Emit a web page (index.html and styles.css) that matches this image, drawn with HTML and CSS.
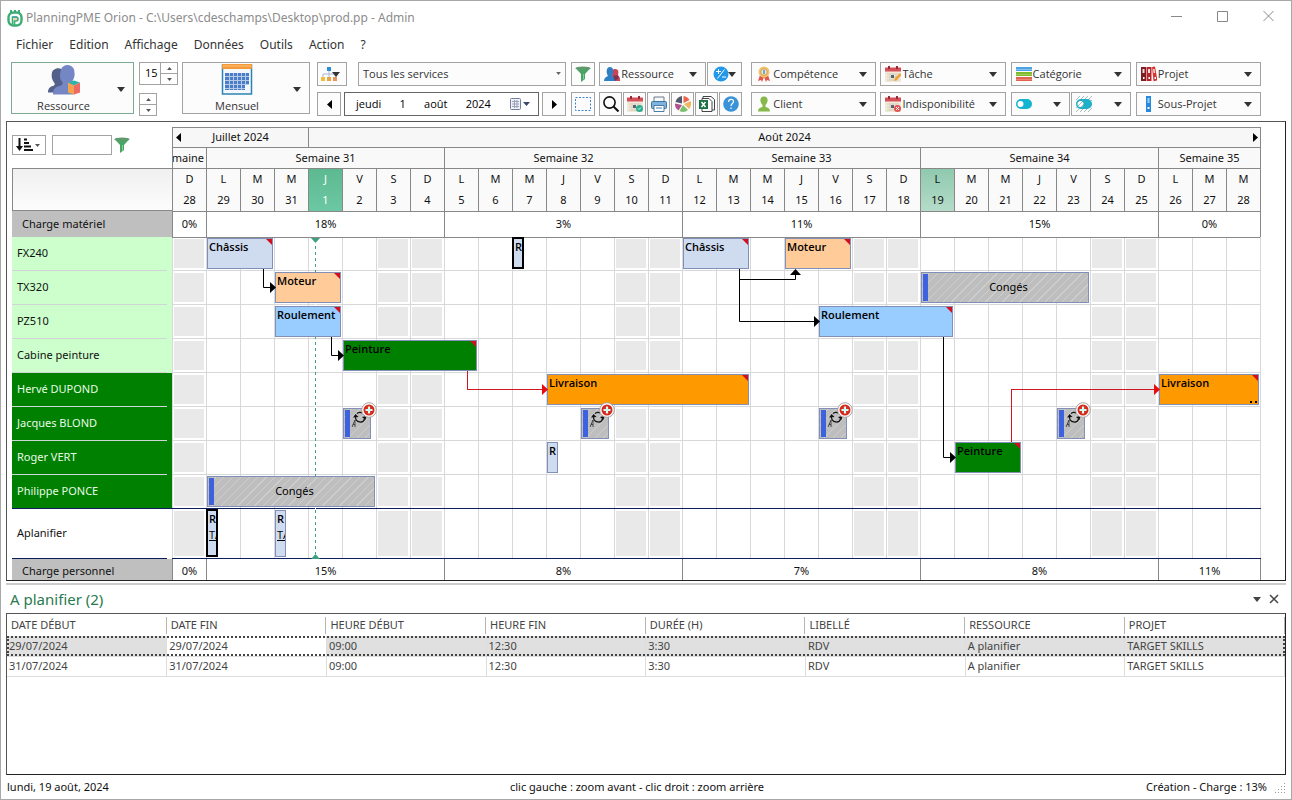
FILE: index.html
```html
<!DOCTYPE html>
<html lang="fr">
<head>
<meta charset="utf-8">
<title>PlanningPME Orion</title>
<link rel="stylesheet" href="styles.css">
</head>
<body>
<svg class="defs" aria-hidden="true">
  <symbol id="caret" viewBox="0 0 8 5"><path d="M0 0h8L4 5z" fill="currentColor"/></symbol>
  <symbol id="funnel" viewBox="0 0 16 16"><path d="M.5 2l5.500 6v8l4-3V8l5.500-6z" fill="#4aa564"/><ellipse cx="8" cy="2.200" rx="7.500" ry="1.800" fill="#5d9a6c"/><path d="M8 8h1v5l-1 .7z" fill="#7fd097"/></symbol>
  <symbol id="cal" viewBox="0 0 16 16"><path d="M0 2h16v14H0z" fill="#f0e9d8"/><path d="M0 1.500h16v4H0z" fill="#d64f58"/><path d="M3 0h2v3H3zM11 0h2v3h-2z" fill="#8a2f38"/><path d="M2 8h12M2 11h12M2 14h12M5 7v8M8 7v8M11 7v8" stroke="#d8d1bf" fill="none"/><path d="M6 9h3v3H6z" fill="#5b6472"/></symbol>
  <symbol id="recur" viewBox="0 0 28 30"><path d="M9 19l3-7v7M10 16.500h2" fill="none" stroke="#444"/><g fill="none" stroke="#111" stroke-width="1.200"><path d="M12.500 9c0 6 8 6.500 9 2"/><path d="M14 5.500c1.500-1.500 4-1.500 5-.5"/></g><path d="M10 9.500L12.500 6l3 3zM19 9l4.500-1-1 4z" fill="#111"/></symbol>
  <symbol id="plus" viewBox="0 0 16 16"><circle cx="8" cy="8" r="7.300" fill="#fff" stroke="#a9a0a0" stroke-width="1"/><circle cx="8" cy="8" r="5.500" fill="#d8291c"/><path d="M8 4.500v7M4.500 8h7" stroke="#c9fff5" stroke-width="2.200"/></symbol>
</svg>
<div class="window">
  <header class="titlebar">
    <svg class="logo" viewBox="0 0 16 17"><rect x="1.500" y="2.500" width="13" height="13" rx="5" fill="#fff" stroke="#3dab74" stroke-width="2.400"/><path d="M4 0v4M8 0v3M12 0v4" stroke="#3dab74" stroke-width="2"/><path d="M5.500 14V7H9q2 0 2 2t-2 2H7.500v4" fill="none" stroke="#3dab74" stroke-width="1.600"/><path d="M6 7h4" stroke="#2f8fcf" stroke-width="1"/><path d="M7 9h3" stroke="#f0a53a" stroke-width="1"/></svg>
    <h1 class="title">PlanningPME Orion - C:\Users\cdeschamps\Desktop\prod.pp - Admin</h1>
    <div class="winbtns">
      <button aria-label="Réduire"><svg viewBox="0 0 12 12"><path d="M0 6.500h11"/></svg></button>
      <button aria-label="Agrandir"><svg viewBox="0 0 12 12"><path d="M.5 1.500h10v10H.5z"/></svg></button>
      <button aria-label="Fermer"><svg viewBox="0 0 12 12"><path d="M.5 1l10 10M10.500 1l-10 10"/></svg></button>
    </div>
  </header>
  <nav class="menubar">
    <button>Fichier</button><button>Edition</button><button>Affichage</button><button>Données</button><button>Outils</button><button>Action</button><button>?</button>
  </nav>

  <div class="toolbar">
    <button class="big res">
      <svg class="bigicon" viewBox="0 0 32 30"><path d="M0 28c0-5 3-6 6-7 1-1 1-2 0-3-2-3-3-6-2-10C5 4 12 2 15 6v22z" fill="#53608a"/><path d="M5 30c0-7 4-8 8-9 2-1 2-3 1-4-3-3-2-8-1-12 2-6 11-6 13 0 1 4 1 8-2 12-1 2 0 3 2 4v9z" fill="#7486c4"/><path d="M20 18l6-2 6 2-6 3z" fill="#2bb5a8"/><path d="M20 18l6 3v9l-6-2z" fill="#f5a14d"/><path d="M32 18l-6 3v9l6-2z" fill="#ef6a62"/></svg>
      <span>Ressource</span><svg class="bigcaret"><use href="#caret"/></svg>
    </button>
    <div class="spins">
      <div class="spin"><input type="text" value="15" aria-label="Pas"><span class="updown"><button aria-label="Plus"><svg class="up"><use href="#caret"/></svg></button><button aria-label="Moins"><svg><use href="#caret"/></svg></button></span></div>
      <div class="spin bare"><span class="updown"><button aria-label="Monter"><svg class="up"><use href="#caret"/></svg></button><button aria-label="Descendre"><svg><use href="#caret"/></svg></button></span></div>
    </div>
    <button class="big">
      <svg class="bigicon" viewBox="0 0 32 31"><rect x="1.500" y="1" width="29" height="29" fill="#f4f8fb" stroke="#2d82b5" stroke-width="1.500"/><rect x="1" y="0" width="30" height="5" rx="1" fill="#f39a3b"/><path d="M2 2h28" stroke="#ffc27e"/><path d="M4 9h24v12h-4v5H4z" fill="#4a7cc9"/><path d="M4 12.500h24M4 16.500h24M4 20.500h24M4 24.500h20M8.500 9v17M12.500 9v17M16.500 9v17M20.500 9v17M24.500 9v12" stroke="#b5cbe6" fill="none"/></svg>
      <span>Mensuel</span><svg class="bigcaret"><use href="#caret"/></svg>
    </button>
    <div class="lines services">
      <div class="line">
        <button class="tool wide" aria-label="Organigramme"><svg class="i22" viewBox="0 0 22 16"><path d="M8 3v5M2 12V8h13v4M8 8v4" stroke="#a9b9d6" fill="none"/><path d="M6 1h4v4H6z" fill="#2b8fd8"/><path d="M0 11h4v4H0z" fill="#efbf3b"/><path d="M6 11h4v4H6z" fill="#eaa33e"/><path d="M12 11h4v4h-4z" fill="#e8935e"/><path d="M11 6h8l-4 5z" fill="#333"/></svg></button>
        <div class="combo grow plain"><select aria-label="Service"><option>Tous les services</option></select><svg class="caret tiny"><use href="#caret"/></svg></div>
      </div>
      <div class="line tight">
        <button class="tool" aria-label="Précédent"><svg class="nav" viewBox="0 0 5 9"><path d="M5 0v9L0 4.500z"/></svg></button>
        <button class="date"><span>jeudi</span><span>1</span><span>août</span><span>2024</span><svg class="i22" viewBox="0 0 22 14"><rect x="1.500" y="1.500" width="10" height="11" rx="1" fill="#eef1f7" stroke="#77809a"/><path d="M3 4.500h7M3 7h7M3 9.500h7M5.500 3v8M8 3v8" stroke="#9aa3b8"/><path d="M14 5h7l-3.500 4z" fill="#3c4a66"/></svg></button>
        <button class="tool" aria-label="Suivant"><svg class="nav" viewBox="0 0 5 9"><path d="M0 0v9l5-4.500z"/></svg></button>
      </div>
    </div>
    <div class="lines filters">
      <button class="tool" aria-label="Filtrer"><svg class="i16"><use href="#funnel"/></svg></button>
      <button class="tool" aria-label="Sélection"><svg class="i16" viewBox="0 0 16 16"><rect x=".5" y="1.500" width="15" height="13" fill="none" stroke="#3b82d0" stroke-dasharray="2 1.500"/></svg></button>
    </div>
    <div class="lines icons">
      <div class="line join">
        <div class="combo grow"><svg class="i16" viewBox="0 0 16 16"><path d="M9 15c0-4-1-4-1-6 0-5 1-6 3-6 3 0 4 2 3 6 2 2 2 4 2 6z" fill="#c94558"/><path d="M0 15c0-3 2-4 4-5-2-3-2-9 2-9s4 6 2 9c2 1 4 2 4 5z" fill="#2f7fc6"/><path d="M9 10l4-1 2 3-4 3z" fill="#7d3550"/></svg><select aria-label="Ressource"><option>Ressource</option></select><svg class="caret"><use href="#caret"/></svg></div>
        <button class="tool pm" aria-label="Plus ou moins"><svg class="i24" viewBox="0 0 24 16"><circle cx="8" cy="8" r="7.500" fill="#2397e8"/><path d="M3 5.500h5M5.500 3v5M9 11h4M11.500 3.500l-7 9" stroke="#fff" fill="none"/><path d="M15 6h8l-4 5z" fill="#333"/></svg></button>
      </div>
      <div class="line join six">
        <button class="tool" aria-label="Rechercher"><svg class="i16" viewBox="0 0 16 16"><circle cx="6.500" cy="6.500" r="5.600" fill="none" stroke="#111" stroke-width="1.600"/><path d="M10.500 10.500l5 5" stroke="#111" stroke-width="2"/></svg></button>
        <button class="tool" aria-label="Valider"><svg class="i16" viewBox="0 0 16 16"><use href="#cal"/><circle cx="12.500" cy="12.500" r="3.500" fill="#27ae8f"/><path d="M11 12.500l1 1 2-2" stroke="#fff" fill="none"/></svg></button>
        <button class="tool" aria-label="Imprimer"><svg class="i16" viewBox="0 0 16 16"><path d="M3 1h10v5H3z" fill="#f5f7f9" stroke="#6d7b88"/><rect x=".5" y="5.500" width="15" height="7" rx="1" fill="#7fb3dd" stroke="#3e74a5"/><path d="M3 9.500h10v6H3z" fill="#fff" stroke="#4b7da8"/><path d="M5 12h6" stroke="#4b7da8"/></svg></button>
        <button class="tool" aria-label="Statistiques"><svg class="i16" viewBox="0 0 16 16"><path d="M7 7.500V0a8 8 0 0 0-6.500 6z" fill="#50586e"/><path d="M8.500 7V0a7.800 7.800 0 0 1 6 4z" fill="#e8654e"/><path d="M15.500 5L9 8l5 5a8 8 0 0 0 1.500-8z" fill="#f1b75c"/><path d="M8 9l5 5a8 8 0 0 1-8.500 1z" fill="#7cc06b"/><path d="M7 9L3.500 14.500A8 8 0 0 1 0 7.500z" fill="#b0508c"/></svg></button>
        <button class="tool" aria-label="Excel"><svg class="i16" viewBox="0 0 16 16"><path d="M4 3V.5h8l3.500 3V14H13" fill="#fff" stroke="#444"/><path d="M3 2.500h7l3 3v10H3z" fill="#fff" stroke="#444"/><rect y="4" width="9" height="9" fill="#1e7145"/><path d="M2.500 6l4 5M6.500 6l-4 5" stroke="#fff" stroke-width="1.500"/></svg></button>
        <button class="tool" aria-label="Aide"><svg class="i16" viewBox="0 0 16 16"><circle cx="8" cy="8" r="7.800" fill="#3a92d8"/><path d="M5.500 6c0-3.500 5-3.500 5-.5C10.500 7.500 8 7.500 8 10M8 11.500V13" fill="none" stroke="#fff" stroke-width="1.200"/></svg></button>
      </div>
    </div>
    <div class="lines drop first">
      <div class="combo"><svg class="i16" viewBox="0 0 16 16"><path d="M4 9l-2 6 3-1 1 2 2-5 2 5 1-2 3 1-2-6z" fill="#e2574c"/><circle cx="8" cy="6" r="5.500" fill="#f2c46d"/><circle cx="8" cy="6" r="3.300" fill="#dfe7ee" stroke="#d99e3d"/><path d="M7 4h2v4H7z" fill="#8aa0b5"/></svg><select aria-label="Compétence"><option>Compétence</option></select><svg class="caret"><use href="#caret"/></svg></div>
      <div class="combo"><svg class="i16" viewBox="0 0 16 16"><path d="M2 15.500c0-3 2-4 4.500-4.500V9C3 5 4 .5 8 .5S13 5 9.500 9v2c2.500.5 4.500 1.500 4.500 4.500z" fill="#86b84a"/></svg><select aria-label="Client"><option>Client</option></select><svg class="caret"><use href="#caret"/></svg></div>
    </div>
    <div class="lines drop">
      <div class="combo"><svg class="i16" viewBox="0 0 16 16"><use href="#cal"/><path d="M9 15l1-3 5-5 1.500 2L12 14z" fill="#efa036"/></svg><select aria-label="Tâche"><option>Tâche</option></select><svg class="caret"><use href="#caret"/></svg></div>
      <div class="combo"><svg class="i16" viewBox="0 0 16 16"><use href="#cal"/><circle cx="12.500" cy="12.500" r="3.500" fill="#e35353"/><path d="M11 11l3 3M14 11l-3 3" stroke="#fff"/></svg><select aria-label="Indisponibilité"><option>Indisponibilité</option></select><svg class="caret"><use href="#caret"/></svg></div>
    </div>
    <div class="lines drop cat">
      <div class="combo"><svg class="i16" viewBox="0 0 16 16"><path d="M0 1h16v4H0z" fill="#4ba3e3"/><path d="M0 6h16v4H0z" fill="#7fba2c"/><path d="M0 11h16v4H0z" fill="#e2644f"/><path d="M0 3.500h16" stroke="#86c2ef"/><path d="M0 8.500h16" stroke="#9fcf58"/><path d="M0 13.500h16" stroke="#ec8878"/></svg><select aria-label="Catégorie"><option>Catégorie</option></select><svg class="caret"><use href="#caret"/></svg></div>
      <div class="line join">
        <div class="combo grow"><svg class="i16" viewBox="0 0 16 16"><rect y="3" width="16" height="10" rx="5" fill="#12b5cf"/><circle cx="4.500" cy="8" r="3" fill="#fff"/></svg><select aria-label="État"><option></option></select><svg class="caret"><use href="#caret"/></svg></div>
        <div class="combo grow"><svg class="i16" viewBox="0 0 16 16"><rect y="3" width="16" height="10" rx="5" fill="#12b5cf"/><circle cx="4.500" cy="8" r="3" fill="#fff"/><path d="M0 4l4-4M0 8l8-8M0 12L12 0M0 16L16 0M4 16L16 4M8 16l8-8M12 16l4-4" stroke="#6d8f99" stroke-width=".6"/></svg><select aria-label="État grisé"><option></option></select><svg class="caret"><use href="#caret"/></svg></div>
      </div>
    </div>
    <div class="lines drop last">
      <div class="combo"><svg class="i16" viewBox="0 0 16 16"><path d="M0 1h5v14H0z" fill="#7e1f24"/><path d="M5.500 1h5v14h-5z" fill="#b5262b"/><path d="M11 1l3-.5 2.500 14-4 .8z" fill="#d9342f"/><path d="M1.500 3h2v4h-2zM7 3h2v4H7zM12 3h1.500l.7 4h-1.500z" fill="#f3dede"/><path d="M2 11h1.500v2H2zM7.500 11H9v2H7.500zM13.500 11H15v2h-1.500z" fill="#fff"/></svg><select aria-label="Projet"><option>Projet</option></select><svg class="caret"><use href="#caret"/></svg></div>
      <div class="combo"><svg class="i16" viewBox="0 0 16 16"><path d="M5 0h5v16H5z" fill="#2589e0"/><path d="M6.500 2h2v5h-2z" fill="#9fd0f8"/><path d="M6.500 11h2v2h-2z" fill="#fff"/></svg><select aria-label="Sous-Projet"><option>Sous-Projet</option></select><svg class="caret"><use href="#caret"/></svg></div>
    </div>
  </div>

  <main class="planner">
    <div class="side">
      <div class="sidetools">
        <button class="sort" aria-label="Trier"><svg viewBox="0 0 26 14"><path d="M3.500 0v10" stroke="#111" stroke-width="2"/><path d="M0 8h7l-3.500 5z" fill="#111"/><path d="M8 1.500h3M8 5h5M8 8.500h7M8 12h9" stroke="#111" stroke-width="2"/><path d="M19 6h5l-2.500 3z" fill="#555"/></svg></button>
        <input type="text" aria-label="Recherche"><svg class="i16"><use href="#funnel"/></svg>
      </div>
      <div class="sidehead"></div>
      <div class="load">Charge matériel</div>
      <ul class="names">
        <li>FX240</li><li>TX320</li><li>PZ510</li><li>Cabine peinture</li>
        <li class="person">Hervé DUPOND</li><li class="person">Jacques BLOND</li><li class="person">Roger VERT</li><li class="person">Philippe PONCE</li>
        <li class="todo">Aplanifier</li>
      </ul>
      <div class="load foot">Charge personnel</div>
    </div>
    <div class="chart">
      <div class="cols months">
        <div class="s4"><svg class="nav prev" viewBox="0 0 5 9"><path d="M5 0v9L0 4.500z"/></svg>Juillet 2024</div>
        <div class="s28">Août 2024<svg class="nav next" viewBox="0 0 5 9"><path d="M0 0v9l5-4.500z"/></svg></div>
      </div>
      <div class="cols weeks"><div class="cut"><span>Semaine 30</span></div><div class="s7">Semaine 31</div><div class="s7">Semaine 32</div><div class="s7">Semaine 33</div><div class="s7">Semaine 34</div><div class="s3">Semaine 35</div></div>
      <div class="cols days">
        <div>D<b>28</b></div><div>L<b>29</b></div><div>M<b>30</b></div><div>M<b>31</b></div><div class="start">J<b>1</b></div><div>V<b>2</b></div><div>S<b>3</b></div><div>D<b>4</b></div>
        <div>L<b>5</b></div><div>M<b>6</b></div><div>M<b>7</b></div><div>J<b>8</b></div><div>V<b>9</b></div><div>S<b>10</b></div><div>D<b>11</b></div>
        <div>L<b>12</b></div><div>M<b>13</b></div><div>M<b>14</b></div><div>J<b>15</b></div><div>V<b>16</b></div><div>S<b>17</b></div><div>D<b>18</b></div>
        <div class="today">L<b>19</b></div><div>M<b>20</b></div><div>M<b>21</b></div><div>J<b>22</b></div><div>V<b>23</b></div><div>S<b>24</b></div><div>D<b>25</b></div>
        <div>L<b>26</b></div><div>M<b>27</b></div><div>M<b>28</b></div>
      </div>
      <div class="cols rates"><div>0%</div><div class="s7">18%</div><div class="s7">3%</div><div class="s7">11%</div><div class="s7">15%</div><div class="s3">0%</div></div>
      <div class="board">
        <i class="off c0"></i><i class="off c6"></i><i class="off c7"></i><i class="off c13"></i><i class="off c14"></i><i class="off c20"></i><i class="off c21"></i><i class="off c27"></i><i class="off c28"></i>
        <i class="off low c0"></i><i class="off low c6"></i><i class="off low c7"></i><i class="off low c13"></i><i class="off low c14"></i><i class="off low c20"></i><i class="off low c21"></i><i class="off low c27"></i><i class="off low c28"></i>
        <div class="now"><svg viewBox="0 0 9 5"><path d="M0 0h9L4.500 5z"/></svg><i></i><svg class="up" viewBox="0 0 9 5"><path d="M0 0h9L4.500 5z"/></svg></div>
        <div class="task blue c1 r1 w2 late">Châssis</div>
        <div class="task blue c10 r1 mini picked">R</div>
        <div class="task blue c15 r1 w2 late">Châssis</div>
        <div class="task peach c18 r1 w2 late">Moteur</div>
        <div class="task peach c3 r2 w2 late">Moteur</div>
        <div class="task leave c22 r2 w5">Congés</div>
        <div class="task sky c3 r3 w2 late">Roulement</div>
        <div class="task sky c19 r3 w4 late">Roulement</div>
        <div class="task green c5 r4 w4 late">Peinture</div>
        <div class="task orange c11 r5 w6 late">Livraison</div>
        <div class="task orange c29 r5 w3 late">Livraison<svg class="more" viewBox="0 0 8 2"><path d="M0 0h2v2H0zM5 0h2v2H5z"/></svg></div>
        <div class="task leave rec c5 r6"><svg class="loop"><use href="#recur"/></svg><svg class="badge"><use href="#plus"/></svg></div>
        <div class="task leave rec c12 r6"><svg class="loop"><use href="#recur"/></svg><svg class="badge"><use href="#plus"/></svg></div>
        <div class="task leave rec c19 r6"><svg class="loop"><use href="#recur"/></svg><svg class="badge"><use href="#plus"/></svg></div>
        <div class="task leave rec c26 r6"><svg class="loop"><use href="#recur"/></svg><svg class="badge"><use href="#plus"/></svg></div>
        <div class="task blue c11 r7 mini">R</div>
        <div class="task green c23 r7 w2 late">Peinture</div>
        <div class="task leave c1 r8 w5">Congés</div>
        <div class="task blue c1 r9 mini picked">R<u>TA</u></div>
        <div class="task blue c3 r9 mini">R<u>TA</u></div>
        <svg class="links" viewBox="0 0 1088 322" preserveAspectRatio="none">
          <g fill="none" stroke="#000"><path d="M91.500 32v18.500H100M159.500 100v18.500H168M567.500 32v52.500H643M567.500 42.500h56V36M771.500 100v120.500H780"/></g>
          <path d="M98 45v11l6-5.500zM166 113v11l6-5.500zM642 79v11l6-5.500zM778 215v11l6-5.500zM618 38h11l-5.500-6z"/>
          <path d="M295 134h1v18h75v1h-76zM839 205v-53h144v1H840v52z" fill="#d01822"/>
          <path d="M370 147v11l6-5.500zM982 147v11l6-5.500z" fill="#e80c0c"/>
        </svg>
      </div>
      <div class="cols rates foot"><div>0%</div><div class="s7">15%</div><div class="s7">8%</div><div class="s7">7%</div><div class="s7">8%</div><div class="s3">11%</div></div>
    </div>
  </main>

  <section class="pending">
    <header class="pendhead"><h2>A planifier (2)</h2><button aria-label="Options"><svg class="i8"><use href="#caret"/></svg></button><button aria-label="Fermer le volet"><svg class="x" viewBox="0 0 10 10"><path d="M1 1l8 8M9 1L1 9"/></svg></button></header>
    <div class="tablebox">
      <table>
        <thead><tr><th>DATE DÉBUT</th><th>DATE FIN</th><th>HEURE DÉBUT</th><th>HEURE FIN</th><th>DURÉE (H)</th><th>LIBELLÉ</th><th>RESSOURCE</th><th>PROJET</th></tr></thead>
        <tbody>
          <tr class="current"><td>29/07/2024</td><td class="focus">29/07/2024</td><td>09:00</td><td>12:30</td><td>3:30</td><td>RDV</td><td>A planifier</td><td>TARGET SKILLS</td></tr>
          <tr><td>31/07/2024</td><td>31/07/2024</td><td>09:00</td><td>12:30</td><td>3:30</td><td>RDV</td><td>A planifier</td><td>TARGET SKILLS</td></tr>
        </tbody>
      </table>
    </div>
  </section>
  <footer class="status"><span>lundi, 19 août, 2024</span><span>clic gauche : zoom avant - clic droit : zoom arrière</span><span>Création - Charge : 13%</span><svg class="grip" viewBox="0 0 11 11"><path d="M9 0h1v1H9zM6 3h1v1H6zM9 3h1v1H9zM3 6h1v1H3zM6 6h1v1H6zM9 6h1v1H9zM0 9h1v1H0zM3 9h1v1H3zM6 9h1v1H6zM9 9h1v1H9z" fill="#999"/></svg></footer>
</div>
</body>
</html>
```
FILE: styles.css
```css
* { box-sizing: border-box; }
body { margin: 0; font: 12px/16px "Noto Sans", "Open Sans", sans-serif; color: #333; background: #fff; }
button, input, select { font: inherit; color: inherit; margin: 0; }
button { background: none; border: 0; padding: 0; }
svg { display: block; flex: none; }
h1, h2, ul { margin: 0; padding: 0; font-weight: 400; list-style: none; }
.defs { position: absolute; width: 0; height: 0; }
.window { min-height: 100vh; border: 1px solid #a8a8a8; display: flex; flex-direction: column; }

.titlebar { display: flex; align-items: center; height: 34px; padding-left: 6px; gap: 3px; color: #8c8c8c; }
.logo { width: 16px; height: 17px; }
.title { flex: 1; font-size: 12px; }
.winbtns { display: flex; padding: 0 16px 4px 0; gap: 34px; }
.winbtns svg { width: 12px; height: 12px; fill: none; stroke: #888; }

.menubar { display: flex; height: 19px; gap: 16px; padding-left: 15px; font-size: 12px; color: #333; }

.toolbar { display: flex; align-items: flex-start; padding: 8px 30px 6px 10px; height: 67px; font: 11px/14px "Open Sans", "Noto Sans", sans-serif; }
.big { position: relative; width: 128px; height: 52px; border: 1px solid #a3a3a3; background: #fcfcfc; display: flex; flex-direction: column; align-items: center; justify-content: space-between; padding: 1px 18px 0 0; }
.big.res { width: 123px; border-color: #7dab92; }
.bigicon { width: 32px; height: 31px; }
.bigcaret { position: absolute; right: 8px; top: 24px; width: 8px; height: 5px; color: #333; }
.spins { display: flex; flex-direction: column; gap: 8px; width: 39px; margin: 0 4px 0 5px; }
.spin { display: flex; height: 23px; border: 1px solid #a3a3a3; }
.spin.bare { width: 18px; }
.spin input { flex: 1; width: 0; border: 0; padding: 0 0 2px 5px; color: #000; }
.updown { width: 17px; display: flex; flex-direction: column; border-left: 1px solid #a3a3a3; }
.bare .updown { border: 0; }
.updown button { flex: 1; display: flex; align-items: center; justify-content: center; }
.updown button + button { border-top: 1px solid #a3a3a3; }
.updown svg { width: 5px; height: 3px; color: #555; }
.up { transform: rotate(180deg); }
.lines { display: flex; flex-direction: column; gap: 6px; }
.services { flex: 1 1 249px; margin-left: 7px; }
.filters { margin-left: 5px; }
.line { display: flex; gap: 11px; }
.tight { gap: 3px; }
.join { gap: 1px; }
.icons { width: 143px; margin-left: 4px; }
.icons .tool { width: 23px; }
.tool { width: 24px; height: 24px; border: 1px solid #a3a3a3; background: #fcfcfc; display: flex; align-items: center; justify-content: center; }
.tool.wide { width: 30px; }
.icons .tool.pm { width: 35px; }
.i16 { width: 16px; height: 16px; }
.i22 { width: 22px; height: 16px; }
.i24 { width: 24px; height: 16px; }
.i8 { width: 8px; height: 5px; }
.nav { width: 5px; height: 9px; fill: #000; }
.combo { position: relative; display: flex; align-items: center; height: 24px; border: 1px solid #a3a3a3; background: #fcfcfc; }
.combo > .i16 { margin-left: 4px; }
.grow { flex: 1; }
.combo select { flex: 1; width: 0; height: 22px; appearance: none; border: 0; background: none; padding: 0 14px 0 1px; }
.plain select { padding-left: 4px; }
.caret { position: absolute; right: 8px; top: 9px; width: 8px; height: 5px; color: #333; pointer-events: none; }
.caret.tiny { right: 4px; width: 5px; height: 3px; color: #666; }
.date { flex: 1; height: 24px; border: 1px solid #666; background: #fff; display: flex; align-items: center; justify-content: space-between; padding: 0 7px 0 11px; color: #000; }
.drop { flex: 1 1 125px; margin-left: 4px; }
.drop.first { margin-left: 9px; }
.drop.cat { flex-basis: 120px; margin: 0 5px; }
.drop.last { margin-left: 0; }

.planner { margin: 0 5px; border: 1px solid #222; border-color: #555 #222 #222 #555; padding: 5px 24px 0 5px; display: flex; font: 11px/14px "Noto Sans", "Open Sans", sans-serif; color: #111; }
.side { width: 160px; flex: none; }
.sidetools { height: 41px; display: flex; align-items: center; gap: 2px; padding-bottom: 5px; }
.sort { width: 34px; height: 20px; border: 1px solid #a3a3a3; margin-right: 4px; display: flex; align-items: center; justify-content: center; }
.sort svg { width: 26px; height: 14px; }
.sidetools input { width: 60px; height: 20px; border: 1px solid #a3a3a3; }
.sidehead { height: 43px; border: 1px solid #888; border-width: 1px 0 1px 1px; background: linear-gradient(#f0f0f0, #fcfcfc); }
.load { height: 26px; padding: 6px 10px; background: #bfbfbf; }
.names li { height: 34px; padding: 9px 5px; background: linear-gradient(#d0d6d8, #d0d6d8) 0 100% / calc(100% - 5px) 1px no-repeat #cfc; }
.names li.person { background-color: green; color: #e8fbe8; }
.names li.person:nth-child(8) { background-image: linear-gradient(#0c1f5c, #0c1f5c); background-size: 100% 1px; }
.names li.todo { height: 50px; padding-top: 17px; background-color: #fff; background-image: linear-gradient(#0c1f5c, #0c1f5c); background-size: calc(100% - 5px) 1px; }
.load.foot { height: 21px; padding-top: 5px; }

.chart { flex: 1; min-width: 0; border-right: 1px solid #888; }
.cols, .board { display: grid; grid-template-columns: repeat(32, minmax(0, 1fr)); }
.cols > div { border-left: 1px solid #888; border-top: 1px solid #888; text-align: center; overflow: hidden; position: relative; }
.s3 { grid-column: span 3; } .s4 { grid-column: span 4; } .s7 { grid-column: span 7; } .s28 { grid-column: span 28; }
.months > div { height: 20px; line-height: 18px; background: #f7f7f7; }
.prev { position: absolute; left: 3px; top: 5px; }
.next { position: absolute; right: 2px; top: 5px; }
.weeks > div { height: 21px; line-height: 20px; background: #f9f9f9; }
.cut { display: flex; justify-content: center; white-space: nowrap; }
.days > div { height: 43px; line-height: 20px; background: #fafafa; }
.days b { display: block; font-weight: 400; line-height: 22px; }
.days .start { background: linear-gradient(#5cb990, #6cc8a4); color: #fff; }
.days .today { background: linear-gradient(#8fc9ae, #b5dcca); }
.rates > div { height: 26px; line-height: 24px; }
.rates { box-shadow: 0 1px #888; position: relative; z-index: 1; }
.rates.foot { box-shadow: none; }
.rates.foot > div { height: 21px; line-height: 24px; border-top: 0; }
.board { position: relative; grid-template-rows: repeat(8, 34px) 50px; margin-right: -1px; padding-right: 1px; background: linear-gradient(#0c1f5c, #0c1f5c) 0 271px / 100% 1px no-repeat, linear-gradient(#0c1f5c, #0c1f5c) 0 321px / 100% 1px no-repeat, linear-gradient(90deg, #d8d8dc 1px, #0000 1px) 0 0 / calc((100% - 1px) / 32) 100%, repeating-linear-gradient(#0000 0 33px, #d8d8dc 33px 34px) 0 0 / 100% 271px no-repeat #fff; }
.off { grid-row: 1 / 9; margin: 0 2px; background: linear-gradient(#fff 2px, #e9e9e9 2px, #e9e9e9 31px, #fff 31px, #fff 33px, #0000 33px) 0 0 / 100% 34px; }
.off.low { grid-row: 9; margin: 2px 2px 3px; background: #e9e9e9; }
.now { grid-column: 5; grid-row: 1 / 10; margin: 1px 0 0 3px; width: 9px; display: flex; flex-direction: column; align-items: center; fill: #3fa07f; }
.now svg { width: 9px; height: 5px; }
.now i { flex: 1; width: 1px; background: repeating-linear-gradient(#fff 0 3px, #3fa07f 3px 6px); }
.links { position: absolute; left: 0; top: 0; width: calc(100% - 1px); height: 100%; pointer-events: none; z-index: 2; }
.task { position: relative; z-index: 1; margin: 1px 1px 2px; border: 1px solid #8290b8; padding: 0 1px; overflow: hidden; white-space: nowrap; color: #000; font: 600 11px/16px "Open Sans", sans-serif; }
.blue { background: #cfdcf0; } .peach { background: #ffcb98; } .sky { background: #99ccff; } .green { background: #008000; } .orange { background: #ff9900; }
.late::after { content: ""; position: absolute; right: 0; top: 0; border: 3px solid #d01020; border-left-color: #0000; border-bottom-color: #0000; }
.leave { background: linear-gradient(#3c62e0, #3c62e0) 1px 1px / 5px calc(100% - 2px) no-repeat, repeating-linear-gradient(135deg, #bebebe 0 5px, #cecece 5px 6px); text-align: center; font: 11px/28px "Noto Sans", sans-serif; padding-left: 8px; }
.mini { width: 11px; margin-right: 0; }
.mini u { display: block; font-weight: 400; }
.picked { width: 12px; border: 2px solid #000; margin-left: 0; margin-top: 0; }
.rec { width: 28px; overflow: visible; padding: 0; }
.loop { width: 28px; height: 30px; margin: -1px; }
.badge { position: absolute; width: 16px; height: 16px; right: -7px; top: -7px; }
.more { position: absolute; right: 0; bottom: 1px; width: 8px; height: 2px; }
.c0 { grid-column: 1; } .c1 { grid-column-start: 2; } .c3 { grid-column-start: 4; } .c5 { grid-column-start: 6; } .c6 { grid-column: 7; } .c7 { grid-column: 8; } .c10 { grid-column-start: 11; } .c11 { grid-column-start: 12; } .c12 { grid-column-start: 13; } .c13 { grid-column: 14; } .c14 { grid-column: 15; } .c15 { grid-column-start: 16; } .c18 { grid-column-start: 19; } .c19 { grid-column-start: 20; } .c20 { grid-column: 21; } .c21 { grid-column: 22; } .c22 { grid-column-start: 23; } .c23 { grid-column-start: 24; } .c26 { grid-column-start: 27; } .c27 { grid-column: 28; } .c28 { grid-column: 29; } .c29 { grid-column-start: 30; }
.w2 { grid-column-end: span 2; } .w3 { grid-column-end: span 3; } .w4 { grid-column-end: span 4; } .w5 { grid-column-end: span 5; } .w6 { grid-column-end: span 6; }
.r1 { grid-row: 1; } .r2 { grid-row: 2; } .r3 { grid-row: 3; } .r4 { grid-row: 4; } .r5 { grid-row: 5; } .r6 { grid-row: 6; } .r7 { grid-row: 7; } .r8 { grid-row: 8; } .r9 { grid-row: 9; }

.pending { flex: 1; display: flex; flex-direction: column; margin: 2px 5px 0; border-top: 2px solid #ccc; }
.pendhead { display: flex; align-items: center; gap: 8px; height: 28px; padding: 0 7px 0 4px; color: #444; }
.pendhead h2 { flex: 1; font-size: 15px; line-height: 20px; color: #2a7a50; }
.x { width: 10px; height: 10px; stroke: #444; stroke-width: 1.5; }
.tablebox { flex: 1; border: 1px solid #222; border-color: #555 #222 #222 #555; }
table { width: 100%; table-layout: fixed; border-collapse: collapse; color: #444; }
th { position: relative; height: 22px; padding: 0 4px; text-align: left; font-weight: 400; font-size: 11px; background: linear-gradient(#b5b5b5, #b5b5b5) 100% 3px / 1px 17px no-repeat; }
td { height: 20px; padding: 0 2px; font-size: 11px; line-height: 14px; border-right: 1px solid #ddd; border-bottom: 1px solid #ddd; }
.current { outline: 2px dotted #444; outline-offset: -2px; }
.current td { background: #e0e0e0; }
.current td.focus { background: #fff; }
.status { position: relative; height: 24px; display: grid; grid-template-columns: 1fr auto 1fr; align-items: center; padding: 0 24px 0 6px; font-size: 11px; color: #111; }
.status span:nth-child(3) { text-align: right; }
.grip { position: absolute; right: 5px; bottom: 5px; width: 11px; height: 11px; }
```
